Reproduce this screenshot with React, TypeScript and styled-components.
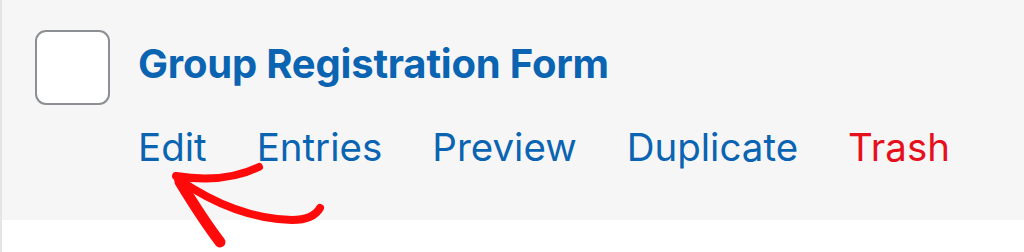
import styled, { createGlobalStyle } from 'styled-components';

const GlobalStyle = createGlobalStyle`
	html, body {
		margin: 0;
		padding: 0;
		background: #ffffff;
	}
	body {
		font-family: Inter, "Noto Sans", "Liberation Sans", sans-serif;
		-webkit-font-smoothing: antialiased;
	}
`;

const Page = styled.div`
	position: relative;
	width: 1024px;
	height: 252px;
	overflow: hidden;
	background: #ffffff;
	border-left: 2px solid #e4e4e6;
	box-sizing: border-box;
`;

const FormRow = styled.div`
	display: flex;
	align-items: flex-start;
	gap: 28px;
	height: 220px;
	box-sizing: border-box;
	padding: 30px 0 0 33px;
	background: #f6f6f6;
`;

const Checkbox = styled.span`
	flex: none;
	width: 75px;
	height: 75px;
	box-sizing: border-box;
	border: 2.5px solid #8c8f94;
	border-radius: 11px;
	background: #ffffff;
`;

const Details = styled.div`
	display: flex;
	flex-direction: column;
	padding-top: 8px;
`;

const Title = styled.a`
	color: #0a64b2;
	font-size: 40px;
	font-weight: 700;
	line-height: 52px;
	letter-spacing: -0.2px;
	text-decoration: none;
`;

const Actions = styled.div`
	display: flex;
	gap: 50px;
	margin-top: 34px;
`;

const Action = styled.a<{ $danger?: boolean }>`
	color: ${({ $danger }) => ($danger ? '#e6101d' : '#0a64b2')};
	font-size: 38.5px;
	font-weight: 400;
	line-height: 46px;
	text-decoration: none;
`;

const Annotation = styled.svg`
	position: absolute;
	left: 0;
	top: 0;
	pointer-events: none;
`;

const actions = ['Edit', 'Entries', 'Preview', 'Duplicate'];

export default function App() {
	return (
		<>
			<GlobalStyle />
			<Page>
				<FormRow>
					<Checkbox />
					<Details>
						<Title href="#">Group Registration Form</Title>
						<Actions>
							{actions.map((label) => (
								<Action key={label} href="#">
									{label}
								</Action>
							))}
							<Action href="#" $danger>
								Trash
							</Action>
						</Actions>
					</Details>
				</FormRow>

				<Annotation width="1024" height="252" viewBox="0 0 1024 252">
					<g fill="none" stroke="#ff0a0a" strokeLinecap="round" strokeLinejoin="round">
						<path d="M257 167 C236 177 210 182 174 176" strokeWidth="8" />
						<path d="M176 179 C205 199 245 219 290 220 C305 220 314 215 318 208" strokeWidth="8" />
						<path d="M178 182 C192 205 205 225 218 242" strokeWidth="11" />
					</g>
				</Annotation>
			</Page>
		</>
	);
}
